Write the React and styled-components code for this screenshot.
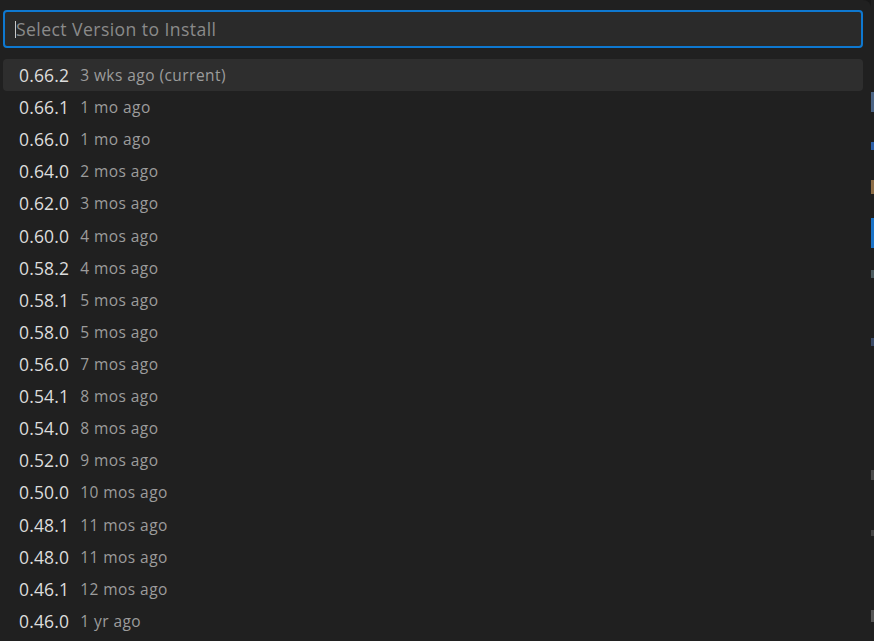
import React from "react";
import styled, { createGlobalStyle } from "styled-components";

const Global = createGlobalStyle`
  html, body { margin: 0; padding: 0; background: #181818; }
  body { width: 874px; height: 641px; overflow: hidden; }
  #root { height: 641px; }
`;

const Screen = styled.div`
  display: flex;
  width: 874px;
  height: 641px;
  background: #181818;
`;

const Panel = styled.div`
  width: 871px;
  height: 660px;
  flex: none;
  box-sizing: border-box;
  background: #202020;
  border-radius: 0 8px 0 0;
  padding: 10px 8px 0 3px;
  display: flex;
  flex-direction: column;
  font-family: "Open Sans", "Noto Sans", sans-serif;
`;

const EdgeStrip = styled.div`
  flex: 1;
  background: linear-gradient(
    to bottom,
    #1f1f1f 0px, #1f1f1f 92px,
    #4a6384 92px, #4a6384 112px,
    #1f1f1f 112px, #1f1f1f 142px,
    #2b5fa8 142px, #2b5fa8 150px,
    #1f1f1f 150px, #1f1f1f 180px,
    #8c6d46 180px, #8c6d46 194px,
    #1f1f1f 194px, #1f1f1f 218px,
    #1a73c8 218px, #1a73c8 248px,
    #1f1f1f 248px, #1f1f1f 270px,
    #4b5a5e 270px, #4b5a5e 278px,
    #1f1f1f 278px, #1f1f1f 338px,
    #3a4a66 338px, #3a4a66 346px,
    #1f1f1f 346px, #1f1f1f 470px,
    #4a4a4a 470px, #4a4a4a 480px,
    #1f1f1f 480px, #1f1f1f 530px,
    #444 530px, #444 536px,
    #1f1f1f 536px, #1f1f1f 610px,
    #555 610px, #555 622px,
    #1f1f1f 622px
  );
`;

const InputBox = styled.div`
  height: 38px;
  box-sizing: border-box;
  border: 2px solid #0e78d0;
  border-radius: 4px;
  background: #2a2a2a;
  display: flex;
  align-items: center;
  padding-left: 10px;
`;

const Caret = styled.span`
  width: 1px;
  height: 17px;
  background: #c8c8c8;
`;

const Placeholder = styled.span`
  color: #8a8a8a;
  font-size: 17.6px;
  letter-spacing: 0.42px;
`;

const List = styled.div`
  margin-top: 11px;
  display: flex;
  flex-direction: column;
`;

const Row = styled.div`
  height: 32.12px;
  flex: none;
  display: flex;
  align-items: center;
  padding-left: 16px;
  border-radius: 4px;
  background: ${(p) => (p.$selected ? "#2e2e2e" : "transparent")};
`;

const Version = styled.span`
  color: #dcdcdc;
  font-size: 17.5px;
  font-weight: 500;
  letter-spacing: 0.15px;
`;

const Desc = styled.span`
  color: #9c9c9c;
  font-size: 15.5px;
  margin-left: 11px;
  letter-spacing: 0.45px;
`;

const versions = [
  ["0.66.2", "3 wks ago (current)"],
  ["0.66.1", "1 mo ago"],
  ["0.66.0", "1 mo ago"],
  ["0.64.0", "2 mos ago"],
  ["0.62.0", "3 mos ago"],
  ["0.60.0", "4 mos ago"],
  ["0.58.2", "4 mos ago"],
  ["0.58.1", "5 mos ago"],
  ["0.58.0", "5 mos ago"],
  ["0.56.0", "7 mos ago"],
  ["0.54.1", "8 mos ago"],
  ["0.54.0", "8 mos ago"],
  ["0.52.0", "9 mos ago"],
  ["0.50.0", "10 mos ago"],
  ["0.48.1", "11 mos ago"],
  ["0.48.0", "11 mos ago"],
  ["0.46.1", "12 mos ago"],
  ["0.46.0", "1 yr ago"],
];

export default function App() {
  return (
    <>
      <Global />
      <Screen>
        <Panel>
          <InputBox>
            <Caret />
            <Placeholder>Select Version to Install</Placeholder>
          </InputBox>
          <List>
            {versions.map(([v, d], i) => (
              <Row key={v} $selected={i === 0}>
                <Version>{v}</Version>
                <Desc>{d}</Desc>
              </Row>
            ))}
          </List>
        </Panel>
        <EdgeStrip />
      </Screen>
    </>
  );
}
